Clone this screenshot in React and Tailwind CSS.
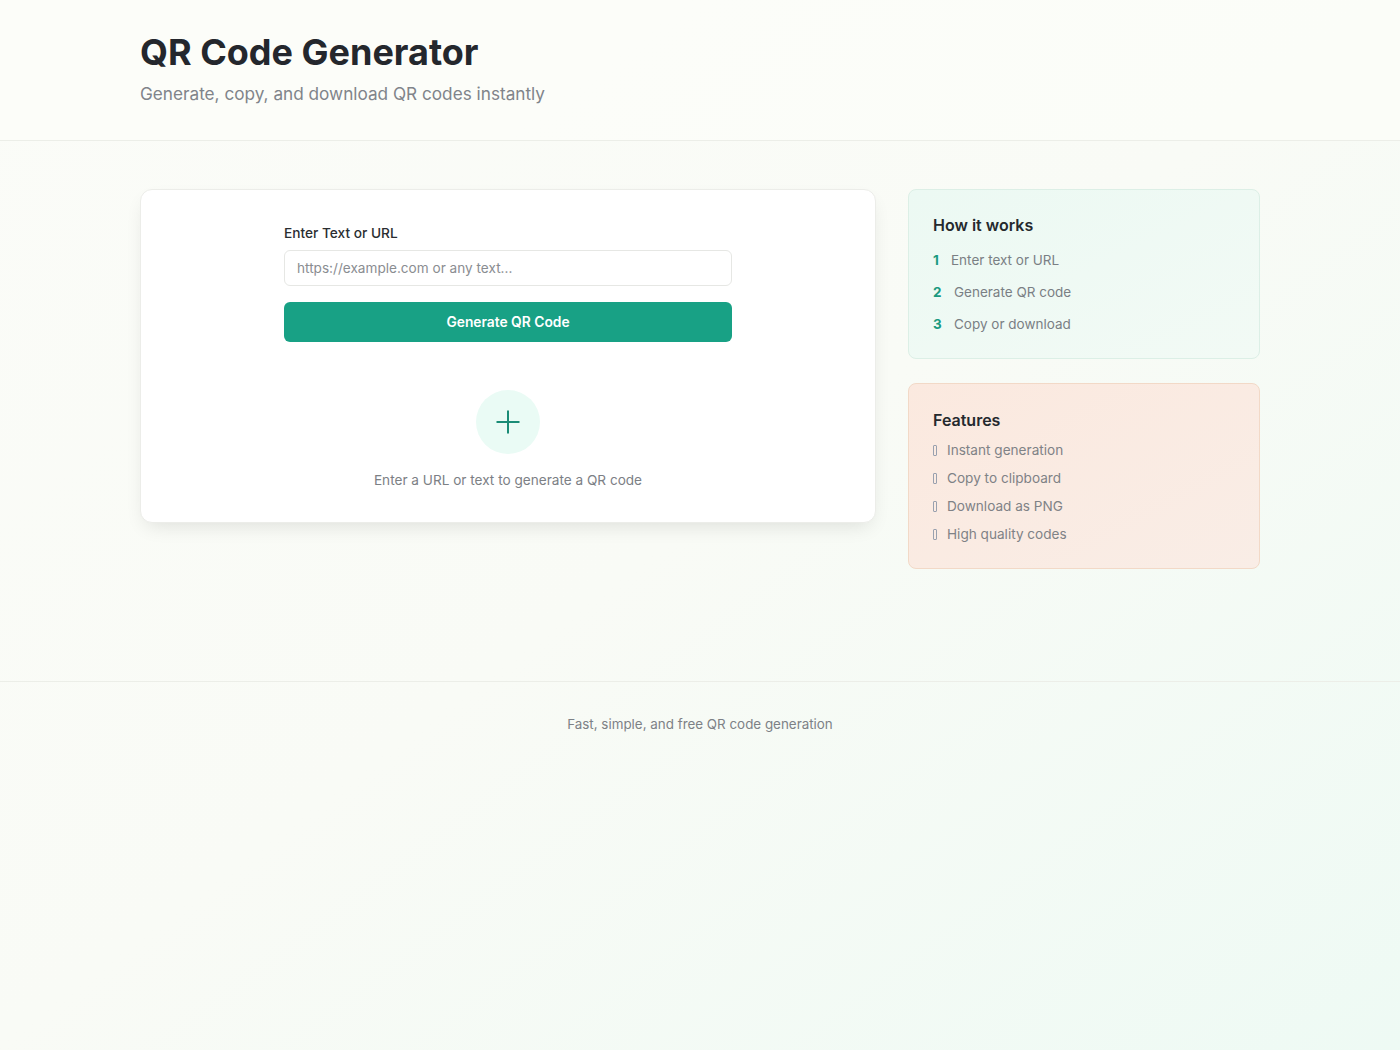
const steps = ['Enter text or URL', 'Generate QR code', 'Copy or download'];
const features = ['Instant generation', 'Copy to clipboard', 'Download as PNG', 'High quality codes'];

// stands in for the icon-font glyph that never loaded
const Tofu = () => (
  <span className="inline-block w-[4px] h-[11px] border border-gray-400 rounded-[1px] mr-[10px]" />
);

const App = () => {
  return (
    <div
      className="min-h-screen bg-gradient-to-br from-[#fbfcf8] via-[#f9fbf6] to-[#eefaf4] text-[#23262b]"
      style={{ fontFamily: 'Inter, "Noto Sans", sans-serif' }}
    >
      <header className="border-b border-[#eceee8] bg-[#fcfdf9]/70">
        <div className="max-w-[1120px] mx-auto pt-[30px] pb-[33px]">
          <h1 className="text-[36px] leading-[44px] font-bold text-[#24272d]">QR Code Generator</h1>
          <p className="mt-[6px] text-[17.2px] leading-[27px] text-[#80848a]">
            Generate, copy, and download QR codes instantly
          </p>
        </div>
      </header>

      <main className="max-w-[1120px] mx-auto pt-12 pb-[112px]">
        <div className="grid grid-cols-3 gap-8 items-start">
          <div className="col-span-2 bg-white rounded-xl border border-[#ecede9] shadow-[0_8px_20px_-6px_rgba(0,0,0,0.12)] px-8 pt-8 pb-[30px]">
            <div className="max-w-[448px] mx-auto">
              <label className="block text-[13.7px] leading-[22px] font-medium text-[#2a2d31] mb-[6px]">
                Enter Text or URL
              </label>
              <input
                type="text"
                placeholder="https://example.com or any text..."
                className="w-full h-[36px] px-3 text-[13.6px] rounded-md border border-[#e6e7e4] bg-white placeholder:text-[#8a8d91] outline-none"
              />
              <button className="mt-4 w-full h-[40px] rounded-md bg-[#18a185] text-white text-[13.8px] font-semibold">
                Generate QR Code
              </button>

              <div className="flex flex-col items-center pt-12 pb-[2px]">
                <div className="w-16 h-16 rounded-full bg-[#eafbf5] flex items-center justify-center">
                  <svg width="24" height="24" viewBox="0 0 24 24" fill="none" stroke="#1a8c76" strokeWidth="2">
                    <line x1="12" y1="0.5" x2="12" y2="23.5" />
                    <line x1="0.5" y1="12" x2="23.5" y2="12" />
                  </svg>
                </div>
                <p className="mt-[16px] text-[13.6px] leading-[20px] text-[#7c8085]">
                  Enter a URL or text to generate a QR code
                </p>
              </div>
            </div>
          </div>

          <div className="flex flex-col gap-6">
            <div className="rounded-lg border border-[#dcefe6] bg-gradient-to-br from-[#ecf9f3] to-[#f2faf5] px-6 pt-[23px] pb-[24px]">
              <h3 className="text-[16px] leading-[24px] font-semibold text-[#25292e] mb-[13px]">How it works</h3>
              <ul className="flex flex-col gap-[12px]">
                {steps.map((s, i) => (
                  <li key={s} className="flex items-center text-[13.5px] leading-[20px] text-[#7a7f84]">
                    <span className={`font-bold text-[#1a9a80] ${i === 0 ? 'w-[18px]' : 'w-[21px]'}`}>{i + 1}</span>
                    {s}
                  </li>
                ))}
              </ul>
            </div>

            <div className="rounded-lg border border-[#f2d9c7] bg-gradient-to-br from-[#fbe9df] to-[#f9ede6] px-6 pt-[24px] pb-[24px]">
              <h3 className="text-[16px] leading-[24px] font-semibold text-[#25292e] mb-[8px]">Features</h3>
              <ul className="flex flex-col gap-[8px]">
                {features.map((f) => (
                  <li key={f} className="flex items-center text-[13.6px] leading-[20px] text-[#7f8286]">
                    <Tofu />
                    {f}
                  </li>
                ))}
              </ul>
            </div>
          </div>
        </div>
      </main>

      <footer className="border-t border-[#eceee8] py-8">
        <p className="text-center text-[13.4px] leading-[20px] text-[#7d8186]">
          Fast, simple, and free QR code generation
        </p>
      </footer>
    </div>
  );
};

export default App;
